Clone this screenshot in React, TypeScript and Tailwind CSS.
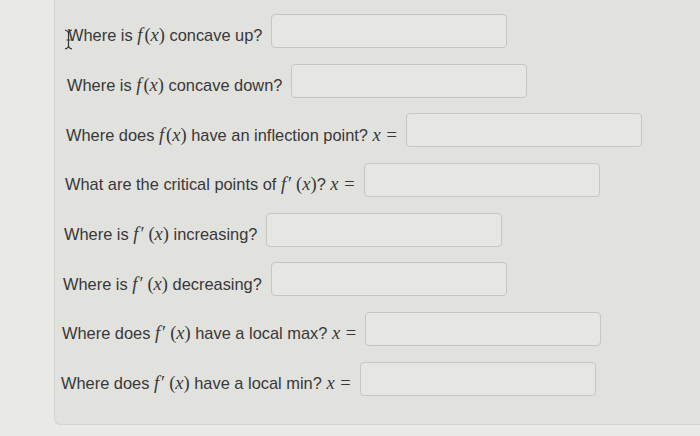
import React from "react";

const serif = { fontFamily: '"Liberation Serif", "Times New Roman", serif' };

function Math({ prime }: { prime?: boolean }) {
  return (
    <span className="text-[18.5px]" style={serif}>
      <span className="italic">f</span>
      {prime ? <span className="ml-[2px] mr-[4px]">′</span> : <span className="ml-[2px]" />}
      <span>(</span>
      <span className="italic">x</span>
      <span>)</span>
    </span>
  );
}

function XEq() {
  return (
    <span className="text-[18.5px]" style={serif}>
      <span className="italic mr-[1px]">x</span> =
    </span>
  );
}

type Row = { before: string; prime?: boolean; after: string; xeq?: boolean };

const rows: Row[] = [
  { before: "Where is", after: " concave up?" },
  { before: "Where is", after: " concave down?" },
  { before: "Where does", after: " have an inflection point?", xeq: true },
  { before: "What are the critical points of", prime: true, after: "?", xeq: true },
  { before: "Where is", prime: true, after: " increasing?" },
  { before: "Where is", prime: true, after: " decreasing?" },
  { before: "Where does", prime: true, after: " have a local max?", xeq: true },
  { before: "Where does", prime: true, after: " have a local min?", xeq: true },
];

export default function App() {
  return (
    <div className="w-[700px] h-[436px] bg-[#e9e9e5] overflow-hidden">
      <div className="relative ml-[54px] h-[425px] bg-[#e1e1de] rounded-bl-[6px] border-l border-b border-[#d5d5d1] pt-[14px] flex flex-col gap-[15.7px]">
        {rows.map((r, i) => (
          <div key={i} className="flex items-center h-[34px]" style={{ paddingLeft: 13 - i }}>
            <span
              className="mt-[10px] text-[16.4px] text-[#383838] whitespace-nowrap"
              style={{ fontFamily: '"Liberation Sans", Arial, sans-serif' }}
            >
              {r.before} <Math prime={r.prime} />
              {r.after}
              {r.xeq ? " " : null}
              {r.xeq ? <XEq /> : null}
            </span>
            <div className="ml-[9px] w-[236px] h-[34px] shrink-0 bg-[#e6e6e3] border border-[#c6c6c2] rounded-[4px]" />
          </div>
        ))}
        <svg className="absolute left-[9px] top-[29px]" width="9" height="21" viewBox="0 0 9 21">
          <path d="M1 1 Q4.5 2 4.5 4 L4.5 17 Q4.5 19 1 20 M8 1 Q4.5 2 4.5 4 M4.5 17 Q4.5 19 8 20 M2.5 11 H6.5" stroke="#333" strokeWidth="1.2" fill="none" />
        </svg>
      </div>
    </div>
  );
}
